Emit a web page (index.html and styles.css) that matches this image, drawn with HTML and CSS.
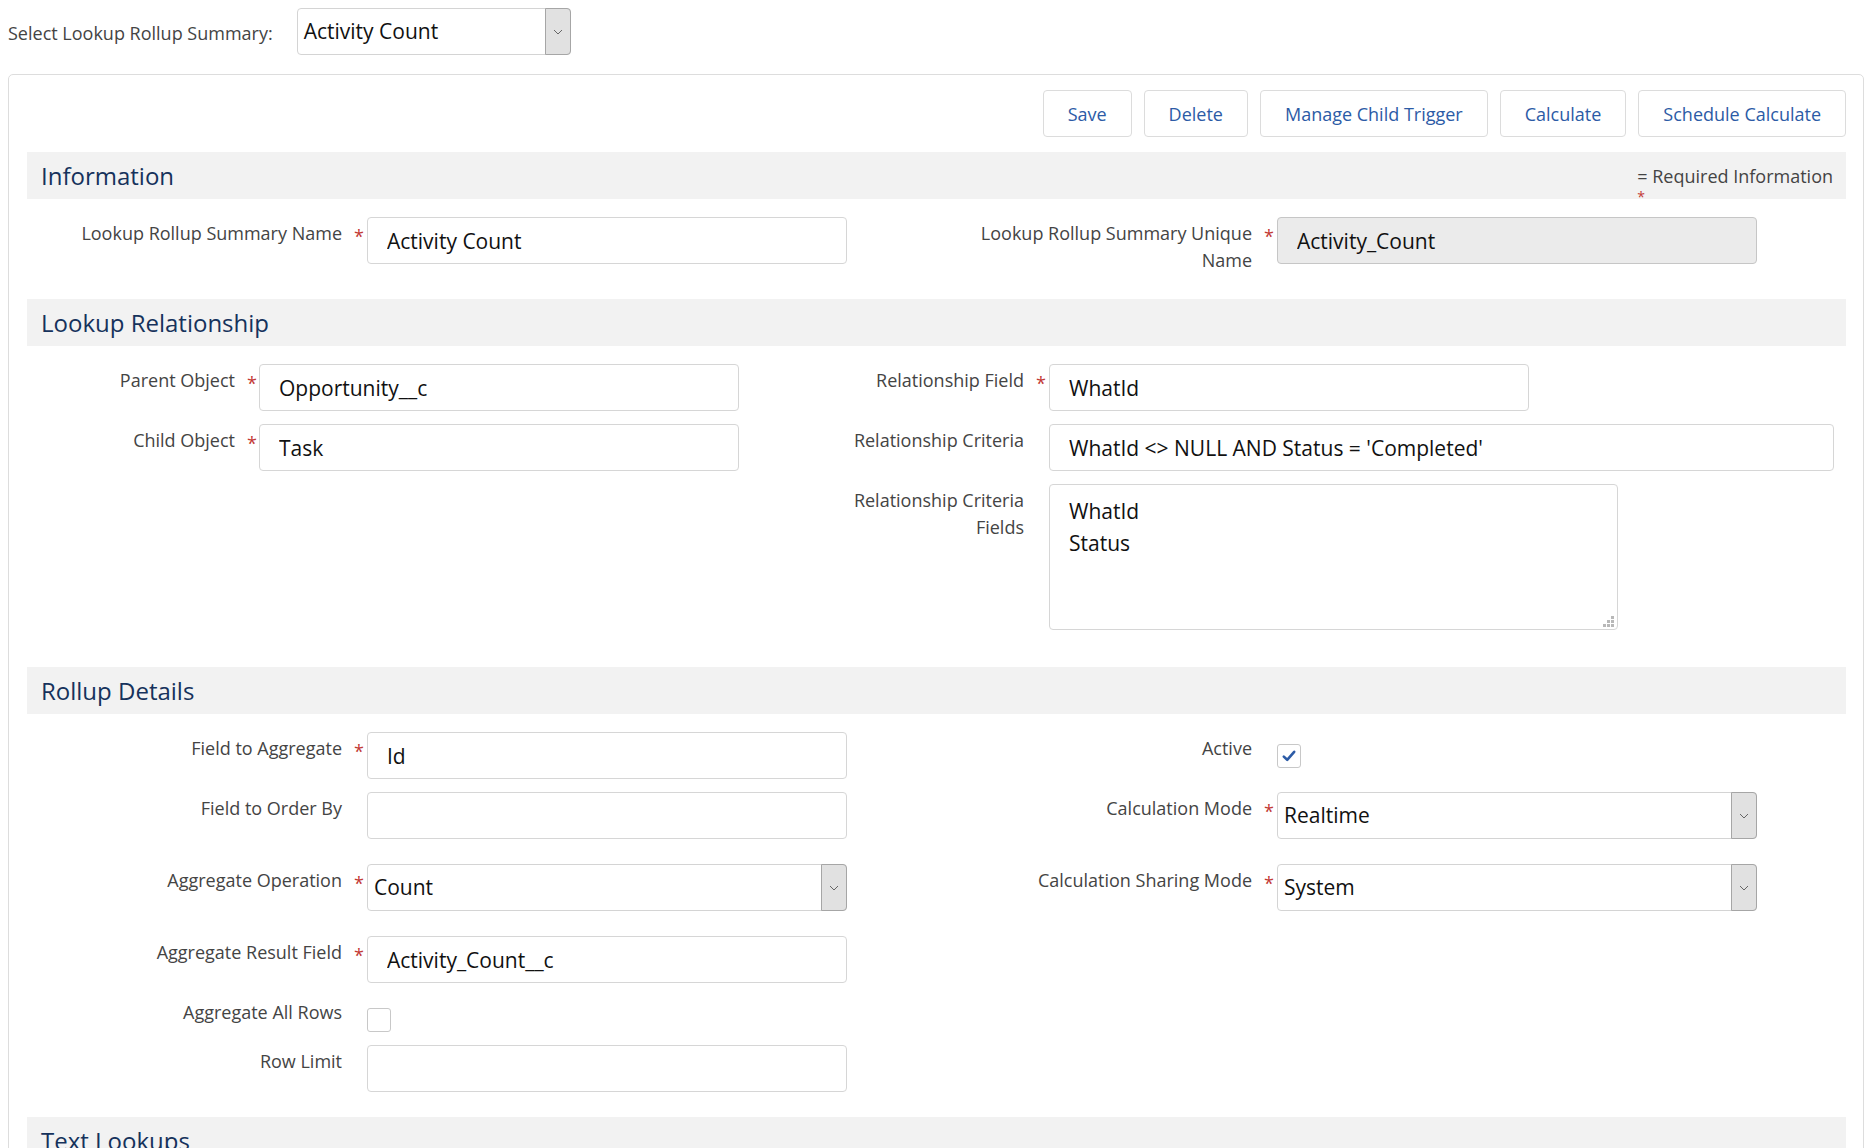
FILE: index.html
```html
<!DOCTYPE html>
<html lang="en">
<head>
<meta charset="utf-8">
<title>Lookup Rollup Summary</title>
<link rel="stylesheet" href="styles.css">
</head>
<body>
<div class="picker-row">
  <span class="picker-label">Select Lookup Rollup Summary:</span>
  <div class="select select-top">
    <span class="select-value">Activity Count</span>
    <span class="select-btn"><svg width="10" height="6" viewBox="0 0 10 6"><path d="M1 1 L5 5 L9 1" fill="none" stroke="#666" stroke-width="1"/></svg></span>
  </div>
</div>

<div class="card">
  <div class="toolbar">
    <button class="btn">Save</button>
    <button class="btn">Delete</button>
    <button class="btn">Manage Child Trigger</button>
    <button class="btn">Calculate</button>
    <button class="btn">Schedule Calculate</button>
  </div>

  <section class="section">
    <div class="section-head">
      <h2 class="section-title">Information</h2>
      <span class="req-legend"><span class="req-star">*</span>= Required Information</span>
    </div>
    <div class="grid grid-wide">
      <div class="lbl">Lookup Rollup Summary Name</div>
      <div class="star">*</div>
      <div class="fld"><input class="input" type="text" value="Activity Count"></div>
      <div class="lbl lbl-info-r">Lookup Rollup Summary Unique Name</div>
      <div class="star">*</div>
      <div class="fld"><input class="input input-ro" type="text" value="Activity_Count" readonly></div>
    </div>
  </section>

  <section class="section">
    <div class="section-head">
      <h2 class="section-title">Lookup Relationship</h2>
    </div>
    <div class="grid grid-lookup">
      <div class="lbl">Parent Object</div>
      <div class="star">*</div>
      <div class="fld"><input class="input" type="text" value="Opportunity__c"></div>
      <div class="lbl lbl-lookup-r">Relationship Field</div>
      <div class="star">*</div>
      <div class="fld"><input class="input" type="text" value="WhatId"></div>

      <div class="lbl">Child Object</div>
      <div class="star">*</div>
      <div class="fld"><input class="input" type="text" value="Task"></div>
      <div class="lbl lbl-lookup-r">Relationship Criteria</div>
      <div class="star"></div>
      <div class="fld"><input class="input input-criteria" type="text" value="WhatId <> NULL AND Status = 'Completed'"></div>

      <div class="lbl lbl-lookup-r col-right">Relationship Criteria Fields</div>
      <div class="star"></div>
      <div class="fld">
        <div class="ta-wrap">
          <textarea class="textarea">WhatId
Status</textarea>
          <svg class="grip" width="12" height="12" viewBox="0 0 12 12"><g fill="#b8b8b8"><rect x="8" y="0" width="3" height="3"/><rect x="4" y="4" width="3" height="3"/><rect x="8" y="4" width="3" height="3"/><rect x="0" y="8" width="3" height="3"/><rect x="4" y="8" width="3" height="3"/><rect x="8" y="8" width="3" height="3"/></g></svg>
        </div>
      </div>
    </div>
  </section>

  <section class="section">
    <div class="section-head">
      <h2 class="section-title">Rollup Details</h2>
    </div>
    <div class="grid grid-wide">
      <div class="lbl">Field to Aggregate</div>
      <div class="star">*</div>
      <div class="fld"><input class="input" type="text" value="Id"></div>
      <div class="lbl">Active</div>
      <div class="star"></div>
      <div class="fld"><span class="checkbox"><svg width="24" height="24" viewBox="0 0 24 24"><path d="M6.8 12.6 L10.2 15.8 L17.2 7.8" fill="none" stroke="#2c5ba6" stroke-width="2.6" stroke-linecap="round" stroke-linejoin="round"/></svg></span></div>

      <div class="lbl">Field to Order By</div>
      <div class="star"></div>
      <div class="fld"><input class="input" type="text" value=""></div>
      <div class="lbl">Calculation Mode</div>
      <div class="star">*</div>
      <div class="fld">
        <div class="select select-field">
          <span class="select-value">Realtime</span>
          <span class="select-btn"><svg width="10" height="6" viewBox="0 0 10 6"><path d="M1 1 L5 5 L9 1" fill="none" stroke="#666" stroke-width="1"/></svg></span>
        </div>
      </div>

      <div class="lbl">Aggregate Operation</div>
      <div class="star">*</div>
      <div class="fld">
        <div class="select select-field">
          <span class="select-value">Count</span>
          <span class="select-btn"><svg width="10" height="6" viewBox="0 0 10 6"><path d="M1 1 L5 5 L9 1" fill="none" stroke="#666" stroke-width="1"/></svg></span>
        </div>
      </div>
      <div class="lbl">Calculation Sharing Mode</div>
      <div class="star">*</div>
      <div class="fld">
        <div class="select select-field">
          <span class="select-value">System</span>
          <span class="select-btn"><svg width="10" height="6" viewBox="0 0 10 6"><path d="M1 1 L5 5 L9 1" fill="none" stroke="#666" stroke-width="1"/></svg></span>
        </div>
      </div>

      <div class="lbl">Aggregate Result Field</div>
      <div class="star">*</div>
      <div class="fld"><input class="input" type="text" value="Activity_Count__c"></div>

      <div class="lbl col-left">Aggregate All Rows</div>
      <div class="star"></div>
      <div class="fld"><span class="checkbox"></span></div>

      <div class="lbl col-left">Row Limit</div>
      <div class="star"></div>
      <div class="fld"><input class="input" type="text" value=""></div>
    </div>
  </section>

  <section class="section">
    <div class="section-head">
      <h2 class="section-title">Text Lookups</h2>
    </div>
    <div class="grid grid-wide grid-empty"></div>
  </section>
</div>
</body>
</html>
```

FILE: styles.css
```css
* {
  box-sizing: border-box;
}

html,
body {
  overflow: hidden;
}

body {
  margin: 8px;
  background: #ffffff;
  color: #444444;
  font-family: "Open Sans", "Noto Sans", sans-serif;
}

/* top picker */
.picker-row {
  display: flex;
  align-items: center;
  gap: 24px;
}

.picker-label {
  font-size: 18px;
  margin-top: 3px;
  color: #444444;
}

.select {
  display: flex;
  height: 47px;
  border: 1px solid #d4d4d4;
  border-radius: 4px;
  background: #ffffff;
}

.select-top {
  width: 274px;
}

.select-field {
  width: 480px;
  margin-bottom: 12px;
}

.select-value {
  flex: 1;
  padding-left: 6px;
  font-size: 21px;
  line-height: 45px;
  color: #111111;
  white-space: nowrap;
}

.select-btn {
  width: 26px;
  margin: -1px -1px -1px 0;
  border: 1px solid #a6a6a6;
  border-radius: 0 4px 4px 0;
  background: #e1e1e1;
  display: flex;
  align-items: center;
  justify-content: center;
}

/* card */
.card {
  margin-top: 19px;
  border: 1px solid #dddddd;
  border-radius: 5px;
  padding: 15px 17px 40px 18px;
}

.toolbar {
  display: flex;
  justify-content: flex-end;
  gap: 12px;
  margin-bottom: 15px;
}

.btn {
  height: 47px;
  padding: 0 24px;
  border: 1px solid #dcdcdc;
  border-radius: 4px;
  background: #ffffff;
  color: #2c5ba6;
  font-family: "Open Sans", "Noto Sans", sans-serif;
  font-size: 18px;
  cursor: pointer;
}

/* sections */
.section-head {
  height: 47px;
  background: #f2f2f2;
  padding: 0 13px 0 14px;
  display: flex;
  align-items: center;
  justify-content: space-between;
}

.section-title {
  margin: 0;
  font-size: 24px;
  font-weight: 400;
  color: #16325c;
}

.req-legend {
  font-size: 18px;
  color: #444444;
  white-space: nowrap;
}

.req-star {
  display: inline-block;
  width: 0;
  margin-left: -4px;
  position: relative;
  top: 19px;
  font-size: 14px;
  color: #c23934;
}

.grid {
  display: grid;
  row-gap: 13px;
  align-items: start;
  padding: 18px 0 25px;
}

.grid-wide {
  grid-template-columns: 315px 25px 480px 405px 25px 1fr;
}

.grid-lookup {
  grid-template-columns: 208px 24px 479px 286px 25px 1fr;
}

.grid-empty {
  min-height: 120px;
}

.lbl {
  justify-self: end;
  text-align: right;
  padding-top: 3px;
  font-size: 18px;
  line-height: 27px;
  color: #444444;
}

.lbl-info-r {
  max-width: 300px;
}

.lbl-lookup-r {
  max-width: 190px;
}

.col-right {
  grid-column-start: 4;
}

.col-left {
  grid-column-start: 1;
}

.star {
  padding-top: 3px;
  padding-left: 12px;
  font-size: 18px;
  line-height: 27px;
  color: #c23934;
}

.star:not(:empty) {
  position: relative;
  top: 3px;
}

.fld {
  min-width: 0;
}

.input {
  display: block;
  width: 480px;
  height: 47px;
  padding: 0 19px;
  border: 1px solid #d6d6d6;
  border-radius: 4px;
  background: #ffffff;
  color: #111111;
  font-family: "Open Sans", "Noto Sans", sans-serif;
  font-size: 21px;
  outline: none;
}

.input-ro {
  background: #ebebeb;
  border-color: #c6c6c6;
}

.input-criteria {
  width: 785px;
}

.ta-wrap {
  position: relative;
  width: 569px;
  height: 146px;
  margin-bottom: 12px;
}

.textarea {
  display: block;
  width: 100%;
  height: 100%;
  padding: 11px 19px;
  border: 1px solid #d6d6d6;
  border-radius: 4px;
  resize: none;
  color: #111111;
  font-family: "Open Sans", "Noto Sans", sans-serif;
  font-size: 21px;
  line-height: 31.5px;
  outline: none;
}

.grip {
  position: absolute;
  right: 3px;
  bottom: 2px;
}

.checkbox {
  display: block;
  width: 24px;
  height: 24px;
  margin-top: 12px;
  border: 1px solid #c8c8c8;
  border-radius: 3px;
  background: #ffffff;
}

.checkbox svg {
  display: block;
  margin: -1px;
}
```
